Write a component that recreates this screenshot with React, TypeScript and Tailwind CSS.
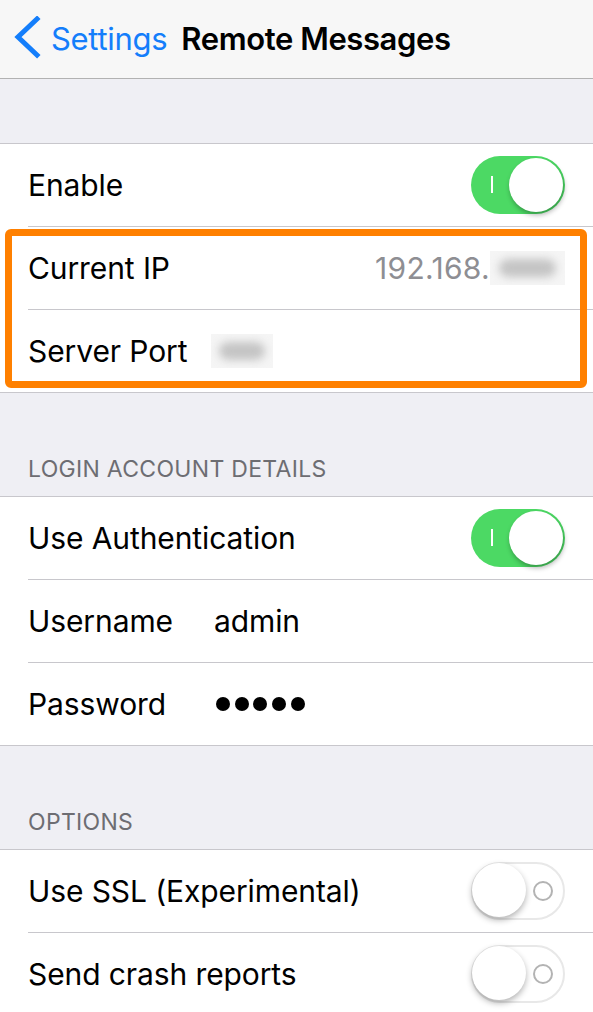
import React from 'react';

const font = { fontFamily: 'Inter, "Noto Sans", sans-serif' };

const ToggleOn: React.FC = () => (
    <div className="relative w-[94px] h-[58px] rounded-full bg-[#4cd964] shrink-0">
        <div className="absolute left-[20px] top-[20px] w-[2px] h-[17px] bg-white"></div>
        <div className="absolute right-[2px] top-[2px] w-[54px] h-[54px] rounded-full bg-white shadow-[1px_3px_5px_rgba(0,0,0,0.3)]"></div>
    </div>
);

const ToggleOff: React.FC = () => (
    <div className="relative w-[94px] h-[58px] rounded-full bg-white border-2 border-[#e8e8e8] shrink-0">
        <div className="absolute left-[60px] top-[17px] w-[20px] h-[20px] rounded-full border-2 border-[#b3b3b3]"></div>
        <div className="absolute -left-px -top-px w-[54px] h-[54px] rounded-full bg-white shadow-[0_3px_6px_rgba(0,0,0,0.3)]"></div>
    </div>
);

const Blur: React.FC<{ className: string }> = ({ className }) => (
    <div className={`bg-[#f5f5f5] flex items-center justify-center overflow-hidden ${className}`}>
        <div className="w-[75%] h-[55%] rounded-full bg-[#c4c4c4] blur-[4px]"></div>
    </div>
);

interface RowProps {
    label: string;
    last?: boolean;
    field?: boolean;
    children?: React.ReactNode;
}

// settings cell; last cell of a group has no inset separator
const Row: React.FC<RowProps> = ({ label, last, field, children }) => (
    <div className="bg-white pl-[28px]">
        <div className={`flex items-center pr-[28px] ${last ? 'h-[82px]' : 'h-[83px] border-b border-[#c8c7cc]'}`}>
            <span className={`text-[30px] text-black tracking-[-0.1px] ${field ? 'w-[186px]' : ''}`}>{label}</span>
            {!field && <div className="flex-1"></div>}
            {children}
        </div>
    </div>
);

const SectionHeader: React.FC<{ title: string }> = ({ title }) => (
    <div className="h-[104px] flex items-end pl-[28px] pb-[15px] border-b border-[#c8c7cc]">
        <span className="text-[23px] leading-none text-[#6d6d72] tracking-[0.3px]">{title}</span>
    </div>
);

export default function App() {
    return (
        <div className="w-[593px] h-[1012px] overflow-hidden bg-[#efeff4]" style={font}>
            <div className="h-[79px] bg-[#f7f7f7] border-b border-[#b2b2b2] flex items-center">
                <svg width="30" height="44" viewBox="0 0 30 44" className="ml-[12px] mt-[-2px] shrink-0">
                    <polyline points="25,3 6,21 25,39" fill="none" stroke="#147efb" strokeWidth="5" strokeLinecap="square" />
                </svg>
                <span className="ml-[9px] text-[31px] text-[#147efb] tracking-[-0.3px]">Settings</span>
                <span className="ml-[14px] text-[31px] font-semibold text-black tracking-[-0.4px]">Remote Messages</span>
            </div>

            <div className="h-[65px] border-b border-[#c8c7cc]"></div>

            <div className="border-b border-[#c8c7cc]">
                <Row label="Enable">
                    <ToggleOn />
                </Row>
                <div className="relative">
                    <Row label="Current IP">
                        <span className="text-[30px] text-[#8e8e93] tracking-[0.3px]">192.168.</span>
                        <Blur className="w-[75px] h-[34px]" />
                    </Row>
                    <Row label="Server Port" field last>
                        <Blur className="w-[62px] h-[34px] -ml-[3px]" />
                    </Row>
                    <div className="absolute left-[5px] right-[6px] top-[2px] bottom-[4px] border-[7px] border-[#ff8000] rounded-[6px]"></div>
                </div>
            </div>

            <SectionHeader title="LOGIN ACCOUNT DETAILS" />

            <div className="border-b border-[#c8c7cc]">
                <Row label="Use Authentication">
                    <ToggleOn />
                </Row>
                <Row label="Username" field>
                    <span className="text-[30px] text-black tracking-[-0.1px]">admin</span>
                </Row>
                <Row label="Password" field last>
                    <div className="flex gap-[4.7px] ml-[2px]">
                        {[0, 1, 2, 3, 4].map(i => (
                            <div key={i} className="w-[14px] h-[14px] rounded-full bg-black"></div>
                        ))}
                    </div>
                </Row>
            </div>

            <SectionHeader title="OPTIONS" />

            <div>
                <Row label="Use SSL (Experimental)">
                    <ToggleOff />
                </Row>
                <Row label="Send crash reports" last>
                    <ToggleOff />
                </Row>
            </div>
        </div>
    );
}
